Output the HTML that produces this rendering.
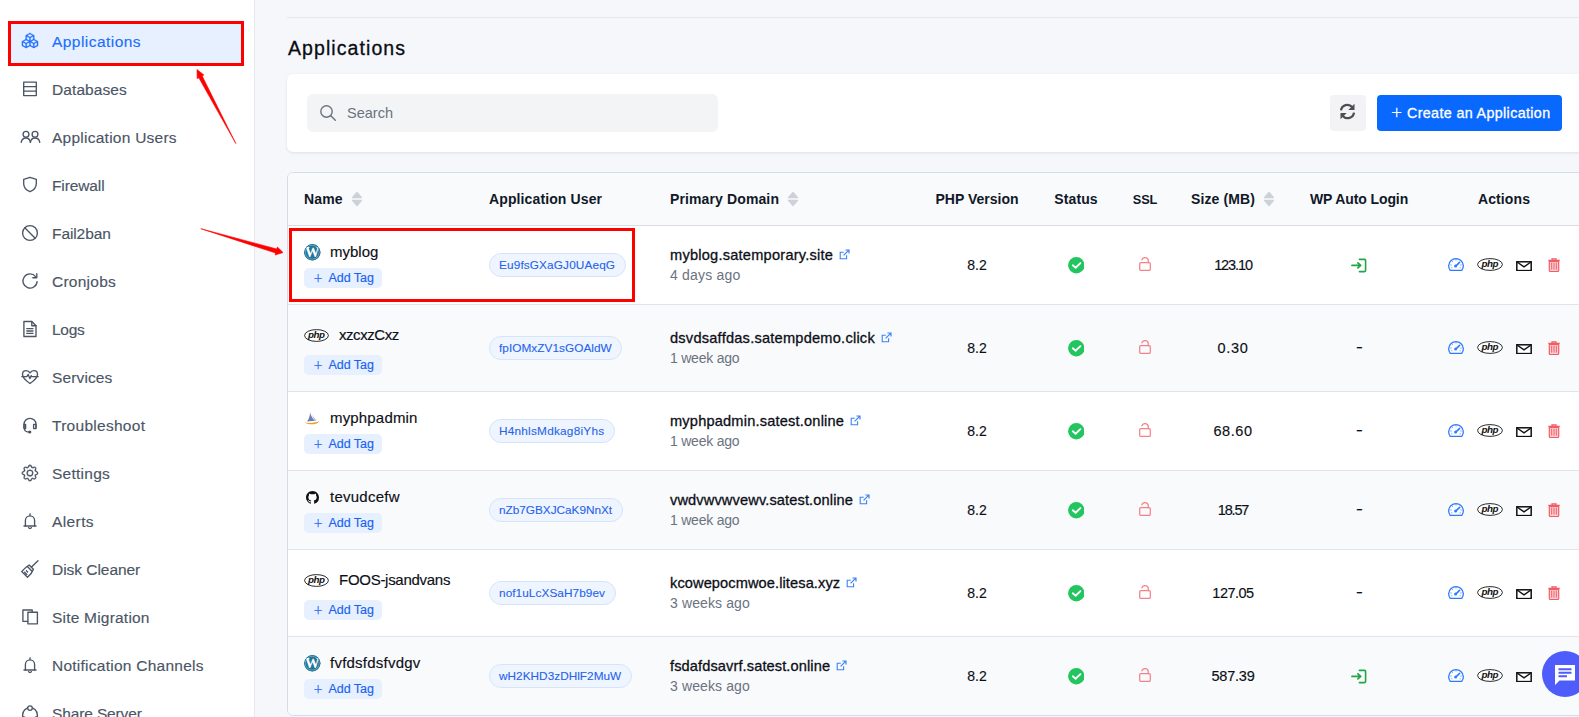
<!DOCTYPE html>
<html lang="en">
<head>
<meta charset="utf-8">
<title>Applications</title>
<style>
*{box-sizing:border-box;margin:0;padding:0}
html,body{width:1579px;height:717px;overflow:hidden}
body{font-family:"Liberation Sans",sans-serif;background:#f5f7fb;color:#111827;position:relative}
i{font-style:normal}
.side{position:absolute;left:0;top:0;width:255px;height:717px;background:#fff;border-right:1px solid #e6e9f0}
.nav{list-style:none;position:absolute;left:0;top:18px;width:254px}
.nav li{height:48px;display:flex;align-items:center;padding-left:21px;color:#4b5565;font-size:15.5px;letter-spacing:.3px;position:relative}
.nav li svg{overflow:visible;width:18px;height:18px;flex:none;margin-right:13px;stroke:currentColor;fill:none;stroke-width:1.35;stroke-linecap:round;stroke-linejoin:round;position:relative;top:-.6px}
.nav li.act{color:#1a6dff}
.nav li.act::before{content:"";position:absolute;left:8px;top:3px;width:236px;height:45px;background:#e6f0ff}
.nav li span{position:relative;-webkit-text-stroke:.15px currentColor}
.main{position:absolute;left:255px;top:0;right:0;height:717px}
.topline{position:absolute;left:32px;right:0;top:17px;height:1px;background:#e5e7eb}
h1{position:absolute;left:33px;top:35.5px;font-size:19.5px;font-weight:400;line-height:24px;color:#0a0c14;letter-spacing:1.08px;-webkit-text-stroke:.3px #0a0c14}
.card{position:absolute;left:32px;top:74px;width:1320px;height:78px;background:#fff;border-radius:6px;box-shadow:0 1px 3px rgba(16,24,40,.10)}
.search{position:absolute;left:20px;top:20px;width:411px;height:38px;border-radius:6px;background:#f3f4f6;display:flex;align-items:center;padding-left:12px;color:#6b7280;font-size:14.5px}
.search svg{width:18px;height:18px;margin-right:10px;stroke:#6b7280;fill:none;stroke-width:1.4;stroke-linecap:round}
.btn-ref{position:absolute;left:1043px;top:21px;width:36px;height:36px;border-radius:4px;background:#f3f3f5;padding:8px 0 0 8.500px}
.btn-new{position:absolute;left:1090px;top:21px;width:185px;height:36px;border-radius:4px;background:#0969ff;color:#fff;font-size:14.3px;display:flex;align-items:center;padding-left:14px;white-space:pre}
.btn-new i{font-family:"DejaVu Sans Light","DejaVu Sans",sans-serif;font-weight:200;font-size:14px;width:16px;position:relative;top:-.8px;left:-.2px;-webkit-text-stroke:.35px #fff}
.btn-new span{letter-spacing:.36px;-webkit-text-stroke:.3px #fff}
.tbl{position:absolute;left:32px;top:172px;width:1320px;height:544px;background:#fff;border:1px solid #d3dde9;border-radius:6px;overflow:hidden}
table{border-collapse:collapse;table-layout:fixed;width:1296px}
th{height:52px;background:#f8fafc;font-size:14px;font-weight:700;color:#111827;text-align:center;border-bottom:1px solid #d9dee6;white-space:nowrap}
th.l,td.l{text-align:left;padding-left:16px}
th span{vertical-align:middle;letter-spacing:.12px}
.ic-sort{width:12px;height:16px;vertical-align:middle;margin-left:8px}
td{font-size:14px;color:#0c0f17;-webkit-text-stroke:.15px #0c0f17;text-align:center;border-bottom:1px solid #e1e5eb;vertical-align:middle;white-space:nowrap}
tr.r79 td{height:79px}
tr.r87 td{height:87px}
tr.alt td{background:#f9fafb}
.nm{display:flex;align-items:center;height:22px;font-size:15px}
.nm.k-php{height:30px}
.nm svg{flex:none;margin-right:9px}
.nm span{position:relative;top:-1px}
.ic-wp{width:16.500px;height:16.500px;border-radius:50%;overflow:hidden;margin-right:9.500px!important;position:relative;top:.4px}
.ic-php{width:25px;height:13px;margin-right:10px!important}
.ic-pma{width:16px;height:13px;margin-right:10px!important}
.ic-gh{width:13px;height:13px;margin-left:1.5px;margin-right:11.5px!important}
.tag{display:block;width:78px;margin-top:5px;height:20px;line-height:21px;padding:0 0 0 24.500px;position:relative;border-radius:5px;background:#e6f0ff;color:#1a62f0;font-size:12.5px;letter-spacing:-.05px;-webkit-text-stroke:.15px #1a62f0}
.tag i{position:absolute;left:9.200px;top:.8px;font-family:"DejaVu Sans Light","DejaVu Sans",sans-serif;font-weight:200;font-size:11.5px;line-height:19px;-webkit-text-stroke:.25px #1a62f0}
.usr{display:inline-block;position:relative;top:.5px;height:24px;line-height:23.500px;padding:0 9.500px 0 9px;letter-spacing:.2px;border:1px solid #d6e4fb;border-radius:12px;background:#eff5ff;color:#2563eb;font-size:11.800px;-webkit-text-stroke:.1px #2563eb}
.dom{display:flex;align-items:center;height:20px;font-size:14.6px;-webkit-text-stroke:.3px #0c0f17}
.ic-ext{width:11px;height:11px;margin-left:6px}
.ago{height:20px;line-height:20px;color:#6b7280;-webkit-text-stroke:0;font-size:14px;letter-spacing:.25px}
.ic-ok{width:16.600px;height:16.600px;vertical-align:middle;position:relative;top:.3px}
.ic-lock{width:12px;height:14px;vertical-align:middle;position:relative;top:-2px}
.ic-login{width:16px;height:15px;vertical-align:middle;position:relative;top:-.1px;left:-.2px}
.acts svg{vertical-align:middle;position:relative;top:-1px}
.sz{font-size:14.5px}
.ic-speed{width:16px;height:14px;top:-2px!important}
.ic-php2{width:26px;height:13px;margin-left:13px}
.ic-mail{width:16px;height:10.400px;margin-left:13px;top:.4px!important}
.ic-trash{width:12px;height:14px;margin-left:16.500px}
.chat{position:absolute;left:1542px;top:651px;width:46px;height:46px;border-radius:23px;background:#4d5cfb;padding:13px 0 0 12px}
.anno{position:absolute;border:3px solid #ff0000}
.a1{left:8px;top:21px;width:236px;height:45px}
.a2{left:289px;top:228px;width:346px;height:74px}
.arrows{position:absolute;left:0;top:0}
.dash{display:inline-block;transform:scaleX(1.45);position:relative;top:-.5px}
</style>
</head>
<body>
<div class="side">
<ul class="nav">
<li class="act"><svg viewBox="0 0 18 18"><g transform="translate(.9 1.1) scale(1.01 .93)" fill="currentColor" stroke="currentColor" stroke-width=".35"><path d="M7.752.066a.5.5 0 0 1 .496 0l3.75 2.143a.5.5 0 0 1 .252.434v3.995l3.498 2A.5.5 0 0 1 16 9.07v4.286a.5.5 0 0 1-.252.434l-3.75 2.143a.5.5 0 0 1-.496 0l-3.502-2-3.502 2.001a.5.5 0 0 1-.496 0l-3.75-2.143A.5.5 0 0 1 0 13.357V9.071a.5.5 0 0 1 .252-.434L3.75 6.638V2.643a.5.5 0 0 1 .252-.434L7.752.066ZM4.25 7.504 1.508 9.071l2.742 1.567 2.742-1.567L4.25 7.504ZM7.5 9.933l-2.75 1.571v3.134l2.75-1.571V9.933Zm1 3.134 2.75 1.571v-3.134L8.5 9.933v3.134Zm.508-3.996 2.742 1.567 2.742-1.567-2.742-1.567-2.742 1.567Zm2.242-2.433V3.504L8.500 5.076V8.21l2.75-1.572ZM7.5 8.21V5.076L4.75 3.504v3.134L7.5 8.21ZM5.258 2.643 8 4.21l2.742-1.567L8 1.076 5.258 2.643ZM15 9.933l-2.75 1.571v3.134L15 13.067V9.933ZM3.75 14.638v-3.134L1 9.933v3.134l2.75 1.571Z"/></g></svg><span style="letter-spacing:0.45px">Applications</span></li>
<li><svg viewBox="0 0 18 18"><rect x="2.7" y="2.100" width="12.600" height="13.500"/><path d="M2.700 6.600H15.300M2.700 11.100H15.300"/></svg><span style="letter-spacing:0.09px">Databases</span></li>
<li><svg viewBox="0 0 18 18"><circle cx="5" cy="6.200" r="2.900"/><circle cx="14" cy="6.200" r="2.900"/><path d="M.2 14.300C.7 11.500 2.500 10 5 10S8.900 11.500 9.400 14.300"/><path d="M9.400 14.300C9.900 11.500 11.500 10 14 10S18.300 11.500 18.800 14.300"/></svg><span style="letter-spacing:0.25px">Application Users</span></li>
<li><svg viewBox="0 0 18 18"><path d="M9 1.300 15.300 3.300V7.800C15.300 11.500 12.800 14.200 9 15.700 5.200 14.200 2.700 11.500 2.700 7.800V3.300Z"/></svg><span style="letter-spacing:-0.11px">Firewall</span></li>
<li><svg viewBox="0 0 18 18"><circle cx="9" cy="9" r="7.400"/><path d="M3.800 3.800 14.200 14.200"/></svg><span style="letter-spacing:-0.09px">Fail2ban</span></li>
<li><svg viewBox="0 0 18 18"><path d="M16.100 9.600A7.100 7.100 0 1 1 14.600 4.600"/><path d="M15.800 1.700V5.700H11.800"/></svg><span style="letter-spacing:0.25px">Cronjobs</span></li>
<li><svg viewBox="0 0 18 18"><path d="M2.900 1.500H10.800L15 5.700V16.500H2.900Z"/><path d="M10.800 1.500V5.700H15"/><path d="M5.800 8.600H12M5.800 11H12M5.800 13.400H12"/></svg><span style="letter-spacing:-0.25px">Logs</span></li>
<li><svg viewBox="0 0 18 18"><path d="M9 15.500C3.200 11.700 1.500 8.700 1.500 6.300 1.500 4 3.200 2.600 5.100 2.600 6.700 2.600 8.200 3.500 9 4.900 9.800 3.500 11.300 2.600 12.900 2.600 14.800 2.600 16.500 4 16.500 6.300 16.500 8.700 14.800 11.700 9 15.500Z"/><path d="M.8 8.600H5.800L7.200 6.400 8.900 10.600 10.200 7.700 10.900 8.600H17.200"/></svg><span style="letter-spacing:0.13px">Services</span></li>
<li><svg viewBox="0 0 18 18"><path d="M3 11.500V8.300A6 6 0 0 1 15 8.300V11.500"/><path d="M12.600 8.400H15V12.600H12.600Z"/><path d="M3 8.400H4.600V12.600H3Z"/><path d="M3.400 12.800C3.600 15 5.200 16 7.600 16"/><circle cx="8.800" cy="16" r=".9" fill="currentColor"/></svg><span style="letter-spacing:0.28px">Troubleshoot</span></li>
<li><svg viewBox="0 0 18 18"><g transform="translate(.7 .8) scale(1.03)" fill="currentColor" stroke="currentColor" stroke-width=".3"><path d="M8 4.754a3.246 3.246 0 1 0 0 6.492 3.246 3.246 0 0 0 0-6.492zM5.754 8a2.246 2.246 0 1 1 4.492 0 2.246 2.246 0 0 1-4.492 0z"/><path d="M9.796 1.343c-.527-1.79-3.065-1.79-3.592 0l-.094.319a.873.873 0 0 1-1.255.52l-.292-.16c-1.64-.892-3.433.902-2.54 2.541l.159.292a.873.873 0 0 1-.52 1.255l-.319.094c-1.79.527-1.79 3.065 0 3.592l.319.094a.873.873 0 0 1 .52 1.255l-.16.292c-.892 1.64.901 3.434 2.541 2.54l.292-.159a.873.873 0 0 1 1.255.52l.094.319c.527 1.79 3.065 1.79 3.592 0l.094-.319a.873.873 0 0 1 1.255-.52l.292.16c1.64.893 3.434-.902 2.54-2.541l-.159-.292a.873.873 0 0 1 .52-1.255l.319-.094c1.79-.527 1.79-3.065 0-3.592l-.319-.094a.873.873 0 0 1-.52-1.255l.16-.292c.893-1.64-.902-3.433-2.541-2.54l-.292.159a.873.873 0 0 1-1.255-.52l-.094-.319zm-2.633.283c.246-.835 1.428-.835 1.674 0l.094.319a1.873 1.873 0 0 0 2.693 1.115l.291-.16c.764-.415 1.6.42 1.184 1.185l-.159.292a1.873 1.873 0 0 0 1.116 2.692l.318.094c.835.246.835 1.428 0 1.674l-.319.094a1.873 1.873 0 0 0-1.115 2.693l.16.291c.415.764-.42 1.6-1.185 1.184l-.291-.159a1.873 1.873 0 0 0-2.693 1.116l-.094.318c-.246.835-1.428.835-1.674 0l-.094-.319a1.873 1.873 0 0 0-2.692-1.115l-.292.16c-.764.415-1.6-.42-1.184-1.185l.159-.291A1.873 1.873 0 0 0 1.945 8.930l-.319-.094c-.835-.246-.835-1.428 0-1.674l.319-.094A1.873 1.873 0 0 0 3.060 4.377l-.16-.292c-.415-.764.42-1.6 1.185-1.184l.292.159a1.873 1.873 0 0 0 2.692-1.115l.094-.319z"/></g></svg><span style="letter-spacing:0.26px">Settings</span></li>
<li><svg viewBox="0 0 18 18"><path d="M4.400 14V8.400A4.600 4.600 0 0 1 13.600 8.400V14"/><path d="M3 14H15"/><path d="M7.600 15.600A1.500 1.500 0 0 0 10.400 15.600"/><path d="M9 1.800V3.600"/></svg><span style="letter-spacing:0.4px">Alerts</span></li>
<li><svg viewBox="0 0 18 18"><path d="M17 .8 10.500 7"/><path d="M8.200 5 12.400 9.200C11.500 12 9.300 14.800 6.500 17.300L.7 11.600C3.300 8.800 5.500 6.400 8.200 5Z"/><path d="M6.400 6.600 10.800 11"/><path d="M3.600 12.200 5.800 14.400M5.400 10.800 6.600 12"/></svg><span style="letter-spacing:-0.04px">Disk Cleaner</span></li>
<li><svg viewBox="0 0 18 18"><path d="M6.900 13.300H1.900V2H11.200V4.200"/><rect x="6.900" y="4.200" width="9.500" height="11.600"/></svg><span style="letter-spacing:0.21px">Site Migration</span></li>
<li><svg viewBox="0 0 18 18"><path d="M4.400 14V8.400A4.600 4.600 0 0 1 13.600 8.400V14"/><path d="M3 14H15"/><path d="M7.600 15.600A1.500 1.500 0 0 0 10.400 15.600"/><path d="M9 1.800V3.600"/></svg><span style="letter-spacing:0.25px">Notification Channels</span></li>
<li><svg viewBox="0 0 18 18"><circle cx="9" cy="11" r="7.400"/><circle cx="9" cy="4.100" r="2.300" fill="#fff"/><circle cx="2.600" cy="14.700" r="1.700" fill="#fff"/><circle cx="15.400" cy="14.700" r="1.700" fill="#fff"/></svg><span style="letter-spacing:-0.13px">Share Server</span></li>
</ul>
</div>
<div class="main">
<div class="topline"></div>
<h1>Applications</h1>
<div class="card">
<div class="search"><svg viewBox="0 0 18 18"><circle cx="7.500" cy="7.500" r="5.700"/><path d="M11.800 11.800 16.300 16.300"/></svg><span>Search</span></div>
<div class="btn-ref"><svg viewBox="0 0 16 16" width="17" height="17"><path d="M1.900 7A6 6 0 0 1 12.400 3.800" fill="none" stroke="#4d4d52" stroke-width="2.100"/><path d="M14.600 .8V6.600H8.800Z" fill="#4d4d52"/><path d="M14.100 9A6 6 0 0 1 3.600 12.200" fill="none" stroke="#4d4d52" stroke-width="2.100"/><path d="M1.400 15.200V9.400H7.200Z" fill="#4d4d52"/></svg></div>
<div class="btn-new"><i>+</i><span>Create an Application</span></div>
</div>
<div class="tbl">
<table>
<colgroup><col style="width:185px"><col style="width:181px"><col style="width:266px"><col style="width:114px"><col style="width:84px"><col style="width:54px"><col style="width:122px"><col style="width:130px"><col style="width:160px"></colgroup>
<thead><tr><th class="l"><span>Name</span><svg class="ic-sort" viewBox="0 0 12 16"><path d="M6 1.300 10.600 6.600H1.400Z" fill="#cdd1d9" stroke="#cdd1d9" stroke-width="1.200" stroke-linejoin="round"/><path d="M6 14.700 10.600 9.400H1.400Z" fill="#cdd1d9" stroke="#cdd1d9" stroke-width="1.200" stroke-linejoin="round"/></svg></th><th class="l"><span>Application User</span></th><th class="l"><span>Primary Domain</span><svg class="ic-sort" viewBox="0 0 12 16"><path d="M6 1.300 10.600 6.600H1.400Z" fill="#cdd1d9" stroke="#cdd1d9" stroke-width="1.200" stroke-linejoin="round"/><path d="M6 14.700 10.600 9.400H1.400Z" fill="#cdd1d9" stroke="#cdd1d9" stroke-width="1.200" stroke-linejoin="round"/></svg></th><th><span style="letter-spacing:0">PHP Version</span></th><th><span>Status</span></th><th><span style="letter-spacing:-.2px;font-size:12.800px">SSL</span></th><th><span>Size (MB)</span><svg class="ic-sort" viewBox="0 0 12 16"><path d="M6 1.300 10.600 6.600H1.400Z" fill="#cdd1d9" stroke="#cdd1d9" stroke-width="1.200" stroke-linejoin="round"/><path d="M6 14.700 10.600 9.400H1.400Z" fill="#cdd1d9" stroke="#cdd1d9" stroke-width="1.200" stroke-linejoin="round"/></svg></th><th><span style="letter-spacing:-.1px">WP Auto Login</span></th><th><span>Actions</span></th></tr></thead>
<tbody>
<tr class="r79">
<td class="l"><div class="nm k-wp"><svg class="ic-wp" viewBox="0 0 17 17"><circle cx="8.500" cy="8.500" r="8.400" fill="#21759b"/><text x="8.500" y="13.700" text-anchor="middle" font-family="Liberation Serif,serif" font-weight="700" font-size="15" fill="#fff">W</text><circle cx="8.500" cy="8.500" r="7.300" fill="none" stroke="#fff" stroke-width=".5" opacity=".85"/><circle cx="8.500" cy="8.500" r="8" fill="none" stroke="#21759b" stroke-width=".9"/></svg><span>myblog</span></div><div class="tag"><i>+</i>Add Tag</div></td>
<td class="l"><span class="usr" style="letter-spacing:0.13px">Eu9fsGXaGJ0UAeqG</span></td>
<td class="l"><div class="dom"><span style="letter-spacing:0.23px">myblog.satemporary.site</span><svg class="ic-ext" viewBox="0 0 11 11"><path d="M7.600 6.300V9.700H1.200V3.200H4.800" fill="none" stroke="#3b82f6" stroke-width="1.100"/><path d="M4.600 6.400 9.800 1.200M6.400 1H10V4.600" fill="none" stroke="#3b82f6" stroke-width="1.200"/></svg></div><div class="ago" style="letter-spacing:0.2px">4 days ago</div></td>
<td>8.2</td>
<td><svg class="ic-ok" viewBox="0 0 17 17"><circle cx="8.500" cy="8.500" r="8.400" fill="#22c55e"/><path d="M4.900 8.500 7.800 11 12.700 6.200" fill="none" stroke="#fff" stroke-width="1.900" stroke-linecap="round" stroke-linejoin="round"/></svg></td>
<td><svg class="ic-lock" viewBox="0 0 12 14"><rect x=".7" y="5.700" width="10.600" height="7.700" rx="1.100" fill="none" stroke="#f5828b" stroke-width="1.250"/><path d="M9.300 5.700V3.900A3.300 3.300 0 0 0 2.900 2.800" fill="none" stroke="#f5828b" stroke-width="1.250" stroke-linecap="round"/></svg></td>
<td class="sz"><span style="letter-spacing:-1.1px">123.10</span></td>
<td><svg class="ic-login" viewBox="0 0 16 15"><path d="M8.400 1.400H13.600A1 1 0 0 1 14.600 2.400V12.600A1 1 0 0 1 13.600 13.600H8.400" fill="none" stroke="#22a548" stroke-width="1.600" stroke-linecap="round"/><path d="M1 7.400H9.300M6.900 4.900 9.700 7.400 6.900 9.900" fill="none" stroke="#22a548" stroke-width="1.750" stroke-linecap="round" stroke-linejoin="round"/></svg></td>
<td class="acts"><svg class="ic-speed" viewBox="0 0 16 14"><path d="M2.200 13.300A7.300 7.300 0 1 1 13.800 13.300Z" fill="#fff" stroke="#2f7bff" stroke-width="1.300" stroke-linejoin="round"/><path d="M8 8.800 11.600 5.400" stroke="#2f7bff" stroke-width="1.600" stroke-linecap="round"/><circle cx="7.600" cy="9" r="1.500" fill="#2f7bff"/><path d="M2.300 8H3.600M3.900 4 4.800 4.900M8 2.200V3.500M12.400 8H13.700M3.300 10.800H4.300M11.700 10.800H12.700" stroke="#2f7bff" stroke-width=".8"/></svg><svg class="ic-php2" viewBox="0 0 26 13"><ellipse cx="13.0" cy="6.500" rx="12.4" ry="5.900" fill="#fff" stroke="#111" stroke-width=".9"/><text x="12.8" y="9.400" text-anchor="middle" font-family="Liberation Sans,sans-serif" font-weight="700" font-style="italic" font-size="9.800" letter-spacing="-.5" fill="#111">php</text></svg><svg class="ic-mail" viewBox="0 0 16 10.400"><rect x=".8" y=".8" width="14.400" height="8.800" fill="#fff" stroke="#111" stroke-width="1.500"/><path d="M1 1 8 5.800 15 1" fill="none" stroke="#111" stroke-width="1.400"/></svg><svg class="ic-trash" viewBox="0 0 12 14"><path d="M.3 2.300H11.700M4 2V.8H8V2" fill="none" stroke="#f25c66" stroke-width="1.300"/><path d="M1.300 3.300H10.700V12.200A1.300 1.300 0 0 1 9.400 13.500H2.600A1.300 1.300 0 0 1 1.300 12.200Z" fill="#fbd0d3" stroke="#f25c66" stroke-width="1.200"/><path d="M3.700 4.600V11.600M6 4.600V11.600M8.300 4.600V11.600" stroke="#f25c66" stroke-width="1"/></svg></td>
</tr>
<tr class="r87 alt">
<td class="l"><div class="nm k-php"><svg class="ic-php" viewBox="0 0 25 13"><ellipse cx="12.5" cy="6.500" rx="11.9" ry="5.900" fill="#fff" stroke="#111" stroke-width=".9"/><text x="12.3" y="9.400" text-anchor="middle" font-family="Liberation Sans,sans-serif" font-weight="700" font-style="italic" font-size="9.800" letter-spacing="-.5" fill="#111">php</text></svg><span style="letter-spacing:-0.44px">xzcxzCxz</span></div><div class="tag"><i>+</i>Add Tag</div></td>
<td class="l"><span class="usr" style="letter-spacing:0.04px">fpIOMxZV1sGOAldW</span></td>
<td class="l"><div class="dom"><span style="letter-spacing:0.23px">dsvdsaffdas.satempdemo.click</span><svg class="ic-ext" viewBox="0 0 11 11"><path d="M7.600 6.300V9.700H1.200V3.200H4.800" fill="none" stroke="#3b82f6" stroke-width="1.100"/><path d="M4.600 6.400 9.800 1.200M6.400 1H10V4.600" fill="none" stroke="#3b82f6" stroke-width="1.200"/></svg></div><div class="ago" style="letter-spacing:-0.23px">1 week ago</div></td>
<td>8.2</td>
<td><svg class="ic-ok" viewBox="0 0 17 17"><circle cx="8.500" cy="8.500" r="8.400" fill="#22c55e"/><path d="M4.900 8.500 7.800 11 12.700 6.200" fill="none" stroke="#fff" stroke-width="1.900" stroke-linecap="round" stroke-linejoin="round"/></svg></td>
<td><svg class="ic-lock" viewBox="0 0 12 14"><rect x=".7" y="5.700" width="10.600" height="7.700" rx="1.100" fill="none" stroke="#f5828b" stroke-width="1.250"/><path d="M9.300 5.700V3.900A3.300 3.300 0 0 0 2.900 2.800" fill="none" stroke="#f5828b" stroke-width="1.250" stroke-linecap="round"/></svg></td>
<td class="sz"><span style="letter-spacing:0.65px">0.30</span></td>
<td><span class="dash">-</span></td>
<td class="acts"><svg class="ic-speed" viewBox="0 0 16 14"><path d="M2.200 13.300A7.300 7.300 0 1 1 13.800 13.300Z" fill="#fff" stroke="#2f7bff" stroke-width="1.300" stroke-linejoin="round"/><path d="M8 8.800 11.600 5.400" stroke="#2f7bff" stroke-width="1.600" stroke-linecap="round"/><circle cx="7.600" cy="9" r="1.500" fill="#2f7bff"/><path d="M2.300 8H3.600M3.900 4 4.800 4.900M8 2.200V3.500M12.400 8H13.700M3.300 10.800H4.300M11.700 10.800H12.700" stroke="#2f7bff" stroke-width=".8"/></svg><svg class="ic-php2" viewBox="0 0 26 13"><ellipse cx="13.0" cy="6.500" rx="12.4" ry="5.900" fill="#fff" stroke="#111" stroke-width=".9"/><text x="12.8" y="9.400" text-anchor="middle" font-family="Liberation Sans,sans-serif" font-weight="700" font-style="italic" font-size="9.800" letter-spacing="-.5" fill="#111">php</text></svg><svg class="ic-mail" viewBox="0 0 16 10.400"><rect x=".8" y=".8" width="14.400" height="8.800" fill="#fff" stroke="#111" stroke-width="1.500"/><path d="M1 1 8 5.800 15 1" fill="none" stroke="#111" stroke-width="1.400"/></svg><svg class="ic-trash" viewBox="0 0 12 14"><path d="M.3 2.300H11.700M4 2V.8H8V2" fill="none" stroke="#f25c66" stroke-width="1.300"/><path d="M1.300 3.300H10.700V12.200A1.300 1.300 0 0 1 9.400 13.500H2.600A1.300 1.300 0 0 1 1.300 12.200Z" fill="#fbd0d3" stroke="#f25c66" stroke-width="1.200"/><path d="M3.700 4.600V11.600M6 4.600V11.600M8.300 4.600V11.600" stroke="#f25c66" stroke-width="1"/></svg></td>
</tr>
<tr class="r79">
<td class="l"><div class="nm k-pma"><svg class="ic-pma" viewBox="0 0 16 13"><path d="M6 .2C6.800 3.500 8.600 6.600 11 8.800L3 9.600C5 6.800 6.100 3.600 6 .2Z" fill="#6e7db5"/><path d="M8.300 2.800C9.300 5 10.800 7 12.800 8.500L11 8.700C9.700 7 8.700 5 8.300 2.800Z" fill="#a9b3d6"/><path d="M.6 10.600C5.500 11.400 10.500 10.800 15.400 9.200 14.600 10.400 13.400 11.300 12 11.700 8 12.800 3.500 12.600 .6 10.600Z" fill="#f59b1c"/></svg><span style="letter-spacing:0.17px">myphpadmin</span></div><div class="tag"><i>+</i>Add Tag</div></td>
<td class="l"><span class="usr" style="letter-spacing:0.23px">H4nhlsMdkag8iYhs</span></td>
<td class="l"><div class="dom"><span style="letter-spacing:0.19px">myphpadmin.satest.online</span><svg class="ic-ext" viewBox="0 0 11 11"><path d="M7.600 6.300V9.700H1.200V3.200H4.800" fill="none" stroke="#3b82f6" stroke-width="1.100"/><path d="M4.600 6.400 9.800 1.200M6.400 1H10V4.600" fill="none" stroke="#3b82f6" stroke-width="1.200"/></svg></div><div class="ago" style="letter-spacing:-0.23px">1 week ago</div></td>
<td>8.2</td>
<td><svg class="ic-ok" viewBox="0 0 17 17"><circle cx="8.500" cy="8.500" r="8.400" fill="#22c55e"/><path d="M4.900 8.500 7.800 11 12.700 6.200" fill="none" stroke="#fff" stroke-width="1.900" stroke-linecap="round" stroke-linejoin="round"/></svg></td>
<td><svg class="ic-lock" viewBox="0 0 12 14"><rect x=".7" y="5.700" width="10.600" height="7.700" rx="1.100" fill="none" stroke="#f5828b" stroke-width="1.250"/><path d="M9.300 5.700V3.900A3.300 3.300 0 0 0 2.900 2.800" fill="none" stroke="#f5828b" stroke-width="1.250" stroke-linecap="round"/></svg></td>
<td class="sz"><span style="letter-spacing:0.54px">68.60</span></td>
<td><span class="dash">-</span></td>
<td class="acts"><svg class="ic-speed" viewBox="0 0 16 14"><path d="M2.200 13.300A7.300 7.300 0 1 1 13.800 13.300Z" fill="#fff" stroke="#2f7bff" stroke-width="1.300" stroke-linejoin="round"/><path d="M8 8.800 11.600 5.400" stroke="#2f7bff" stroke-width="1.600" stroke-linecap="round"/><circle cx="7.600" cy="9" r="1.500" fill="#2f7bff"/><path d="M2.300 8H3.600M3.900 4 4.800 4.900M8 2.200V3.500M12.400 8H13.700M3.300 10.800H4.300M11.700 10.800H12.700" stroke="#2f7bff" stroke-width=".8"/></svg><svg class="ic-php2" viewBox="0 0 26 13"><ellipse cx="13.0" cy="6.500" rx="12.4" ry="5.900" fill="#fff" stroke="#111" stroke-width=".9"/><text x="12.8" y="9.400" text-anchor="middle" font-family="Liberation Sans,sans-serif" font-weight="700" font-style="italic" font-size="9.800" letter-spacing="-.5" fill="#111">php</text></svg><svg class="ic-mail" viewBox="0 0 16 10.400"><rect x=".8" y=".8" width="14.400" height="8.800" fill="#fff" stroke="#111" stroke-width="1.500"/><path d="M1 1 8 5.800 15 1" fill="none" stroke="#111" stroke-width="1.400"/></svg><svg class="ic-trash" viewBox="0 0 12 14"><path d="M.3 2.300H11.700M4 2V.8H8V2" fill="none" stroke="#f25c66" stroke-width="1.300"/><path d="M1.300 3.300H10.700V12.200A1.300 1.300 0 0 1 9.400 13.500H2.600A1.300 1.300 0 0 1 1.300 12.200Z" fill="#fbd0d3" stroke="#f25c66" stroke-width="1.200"/><path d="M3.700 4.600V11.600M6 4.600V11.600M8.300 4.600V11.600" stroke="#f25c66" stroke-width="1"/></svg></td>
</tr>
<tr class="r79 alt">
<td class="l"><div class="nm k-gh"><svg class="ic-gh" viewBox="0 0 16 16"><path fill="#111" d="M8 0C3.580 0 0 3.580 0 8c0 3.540 2.290 6.530 5.470 7.590.4.070.550-.170.550-.380 0-.190-.010-.820-.010-1.490-2.010.370-2.530-.490-2.690-.940-.090-.230-.480-.940-.820-1.130-.280-.150-.680-.520-.010-.530.630-.010 1.080.580 1.230.820.720 1.210 1.870.870 2.330.660.070-.520.280-.870.510-1.070-1.780-.2-3.640-.890-3.640-3.950 0-.870.310-1.590.820-2.150-.080-.2-.360-1.020.080-2.120 0 0 .670-.210 2.200.820.640-.180 1.320-.270 2-.270.680 0 1.360.090 2 .270 1.530-1.040 2.200-.820 2.200-.820.440 1.100.160 1.920.080 2.120.510.560.820 1.270.820 2.150 0 3.070-1.870 3.750-3.650 3.950.290.250.540.730.540 1.480 0 1.070-.010 1.930-.010 2.200 0 .210.150.460.550.380A8.012 8.012 0 0 0 16 8c0-4.420-3.580-8-8-8z"/></svg><span style="letter-spacing:0.25px">tevudcefw</span></div><div class="tag"><i>+</i>Add Tag</div></td>
<td class="l"><span class="usr" style="letter-spacing:-0.02px">nZb7GBXJCaK9NnXt</span></td>
<td class="l"><div class="dom"><span style="letter-spacing:0.13px">vwdvwvwvewv.satest.online</span><svg class="ic-ext" viewBox="0 0 11 11"><path d="M7.600 6.300V9.700H1.200V3.200H4.800" fill="none" stroke="#3b82f6" stroke-width="1.100"/><path d="M4.600 6.400 9.800 1.200M6.400 1H10V4.600" fill="none" stroke="#3b82f6" stroke-width="1.200"/></svg></div><div class="ago" style="letter-spacing:-0.23px">1 week ago</div></td>
<td>8.2</td>
<td><svg class="ic-ok" viewBox="0 0 17 17"><circle cx="8.500" cy="8.500" r="8.400" fill="#22c55e"/><path d="M4.900 8.500 7.800 11 12.700 6.200" fill="none" stroke="#fff" stroke-width="1.900" stroke-linecap="round" stroke-linejoin="round"/></svg></td>
<td><svg class="ic-lock" viewBox="0 0 12 14"><rect x=".7" y="5.700" width="10.600" height="7.700" rx="1.100" fill="none" stroke="#f5828b" stroke-width="1.250"/><path d="M9.300 5.700V3.900A3.300 3.300 0 0 0 2.900 2.800" fill="none" stroke="#f5828b" stroke-width="1.250" stroke-linecap="round"/></svg></td>
<td class="sz"><span style="letter-spacing:-1.2px">18.57</span></td>
<td><span class="dash">-</span></td>
<td class="acts"><svg class="ic-speed" viewBox="0 0 16 14"><path d="M2.200 13.300A7.300 7.300 0 1 1 13.800 13.300Z" fill="#fff" stroke="#2f7bff" stroke-width="1.300" stroke-linejoin="round"/><path d="M8 8.800 11.600 5.400" stroke="#2f7bff" stroke-width="1.600" stroke-linecap="round"/><circle cx="7.600" cy="9" r="1.500" fill="#2f7bff"/><path d="M2.300 8H3.600M3.900 4 4.800 4.900M8 2.200V3.500M12.400 8H13.700M3.300 10.800H4.300M11.700 10.800H12.700" stroke="#2f7bff" stroke-width=".8"/></svg><svg class="ic-php2" viewBox="0 0 26 13"><ellipse cx="13.0" cy="6.500" rx="12.4" ry="5.900" fill="#fff" stroke="#111" stroke-width=".9"/><text x="12.8" y="9.400" text-anchor="middle" font-family="Liberation Sans,sans-serif" font-weight="700" font-style="italic" font-size="9.800" letter-spacing="-.5" fill="#111">php</text></svg><svg class="ic-mail" viewBox="0 0 16 10.400"><rect x=".8" y=".8" width="14.400" height="8.800" fill="#fff" stroke="#111" stroke-width="1.500"/><path d="M1 1 8 5.800 15 1" fill="none" stroke="#111" stroke-width="1.400"/></svg><svg class="ic-trash" viewBox="0 0 12 14"><path d="M.3 2.300H11.700M4 2V.8H8V2" fill="none" stroke="#f25c66" stroke-width="1.300"/><path d="M1.300 3.300H10.700V12.200A1.300 1.300 0 0 1 9.400 13.500H2.600A1.300 1.300 0 0 1 1.300 12.200Z" fill="#fbd0d3" stroke="#f25c66" stroke-width="1.200"/><path d="M3.700 4.600V11.600M6 4.600V11.600M8.300 4.600V11.600" stroke="#f25c66" stroke-width="1"/></svg></td>
</tr>
<tr class="r87">
<td class="l"><div class="nm k-php"><svg class="ic-php" viewBox="0 0 25 13"><ellipse cx="12.5" cy="6.500" rx="11.9" ry="5.900" fill="#fff" stroke="#111" stroke-width=".9"/><text x="12.3" y="9.400" text-anchor="middle" font-family="Liberation Sans,sans-serif" font-weight="700" font-style="italic" font-size="9.800" letter-spacing="-.5" fill="#111">php</text></svg><span style="letter-spacing:-0.28px">FOOS-jsandvans</span></div><div class="tag"><i>+</i>Add Tag</div></td>
<td class="l"><span class="usr" style="letter-spacing:0.07px">nof1uLcXSaH7b9ev</span></td>
<td class="l"><div class="dom"><span style="letter-spacing:0.1px">kcowepocmwoe.litesa.xyz</span><svg class="ic-ext" viewBox="0 0 11 11"><path d="M7.600 6.300V9.700H1.200V3.200H4.800" fill="none" stroke="#3b82f6" stroke-width="1.100"/><path d="M4.600 6.400 9.800 1.200M6.400 1H10V4.600" fill="none" stroke="#3b82f6" stroke-width="1.200"/></svg></div><div class="ago" style="letter-spacing:0.12px">3 weeks ago</div></td>
<td>8.2</td>
<td><svg class="ic-ok" viewBox="0 0 17 17"><circle cx="8.500" cy="8.500" r="8.400" fill="#22c55e"/><path d="M4.900 8.500 7.800 11 12.700 6.200" fill="none" stroke="#fff" stroke-width="1.900" stroke-linecap="round" stroke-linejoin="round"/></svg></td>
<td><svg class="ic-lock" viewBox="0 0 12 14"><rect x=".7" y="5.700" width="10.600" height="7.700" rx="1.100" fill="none" stroke="#f5828b" stroke-width="1.250"/><path d="M9.300 5.700V3.900A3.300 3.300 0 0 0 2.900 2.800" fill="none" stroke="#f5828b" stroke-width="1.250" stroke-linecap="round"/></svg></td>
<td class="sz"><span style="letter-spacing:-0.5px">127.05</span></td>
<td><span class="dash">-</span></td>
<td class="acts"><svg class="ic-speed" viewBox="0 0 16 14"><path d="M2.200 13.300A7.300 7.300 0 1 1 13.800 13.300Z" fill="#fff" stroke="#2f7bff" stroke-width="1.300" stroke-linejoin="round"/><path d="M8 8.800 11.600 5.400" stroke="#2f7bff" stroke-width="1.600" stroke-linecap="round"/><circle cx="7.600" cy="9" r="1.500" fill="#2f7bff"/><path d="M2.300 8H3.600M3.900 4 4.800 4.900M8 2.200V3.500M12.400 8H13.700M3.300 10.800H4.300M11.700 10.800H12.700" stroke="#2f7bff" stroke-width=".8"/></svg><svg class="ic-php2" viewBox="0 0 26 13"><ellipse cx="13.0" cy="6.500" rx="12.4" ry="5.900" fill="#fff" stroke="#111" stroke-width=".9"/><text x="12.8" y="9.400" text-anchor="middle" font-family="Liberation Sans,sans-serif" font-weight="700" font-style="italic" font-size="9.800" letter-spacing="-.5" fill="#111">php</text></svg><svg class="ic-mail" viewBox="0 0 16 10.400"><rect x=".8" y=".8" width="14.400" height="8.800" fill="#fff" stroke="#111" stroke-width="1.500"/><path d="M1 1 8 5.800 15 1" fill="none" stroke="#111" stroke-width="1.400"/></svg><svg class="ic-trash" viewBox="0 0 12 14"><path d="M.3 2.300H11.700M4 2V.8H8V2" fill="none" stroke="#f25c66" stroke-width="1.300"/><path d="M1.300 3.300H10.700V12.200A1.300 1.300 0 0 1 9.400 13.500H2.600A1.300 1.300 0 0 1 1.300 12.200Z" fill="#fbd0d3" stroke="#f25c66" stroke-width="1.200"/><path d="M3.700 4.600V11.600M6 4.600V11.600M8.300 4.600V11.600" stroke="#f25c66" stroke-width="1"/></svg></td>
</tr>
<tr class="r79 alt">
<td class="l"><div class="nm k-wp"><svg class="ic-wp" viewBox="0 0 17 17"><circle cx="8.500" cy="8.500" r="8.400" fill="#21759b"/><text x="8.500" y="13.700" text-anchor="middle" font-family="Liberation Serif,serif" font-weight="700" font-size="15" fill="#fff">W</text><circle cx="8.500" cy="8.500" r="7.300" fill="none" stroke="#fff" stroke-width=".5" opacity=".85"/><circle cx="8.500" cy="8.500" r="8" fill="none" stroke="#21759b" stroke-width=".9"/></svg><span style="letter-spacing:0.23px">fvfdsfdsfvdgv</span></div><div class="tag"><i>+</i>Add Tag</div></td>
<td class="l"><span class="usr" style="letter-spacing:0.02px">wH2KHD3zDHlF2MuW</span></td>
<td class="l"><div class="dom"><span style="letter-spacing:0.11px">fsdafdsavrf.satest.online</span><svg class="ic-ext" viewBox="0 0 11 11"><path d="M7.600 6.300V9.700H1.200V3.200H4.800" fill="none" stroke="#3b82f6" stroke-width="1.100"/><path d="M4.600 6.400 9.800 1.200M6.400 1H10V4.600" fill="none" stroke="#3b82f6" stroke-width="1.200"/></svg></div><div class="ago" style="letter-spacing:0.12px">3 weeks ago</div></td>
<td>8.2</td>
<td><svg class="ic-ok" viewBox="0 0 17 17"><circle cx="8.500" cy="8.500" r="8.400" fill="#22c55e"/><path d="M4.900 8.500 7.800 11 12.700 6.200" fill="none" stroke="#fff" stroke-width="1.900" stroke-linecap="round" stroke-linejoin="round"/></svg></td>
<td><svg class="ic-lock" viewBox="0 0 12 14"><rect x=".7" y="5.700" width="10.600" height="7.700" rx="1.100" fill="none" stroke="#f5828b" stroke-width="1.250"/><path d="M9.300 5.700V3.900A3.300 3.300 0 0 0 2.900 2.800" fill="none" stroke="#f5828b" stroke-width="1.250" stroke-linecap="round"/></svg></td>
<td class="sz"><span style="letter-spacing:-0.2px">587.39</span></td>
<td><svg class="ic-login" viewBox="0 0 16 15"><path d="M8.400 1.400H13.600A1 1 0 0 1 14.600 2.400V12.600A1 1 0 0 1 13.600 13.600H8.400" fill="none" stroke="#22a548" stroke-width="1.600" stroke-linecap="round"/><path d="M1 7.400H9.300M6.900 4.900 9.700 7.400 6.900 9.900" fill="none" stroke="#22a548" stroke-width="1.750" stroke-linecap="round" stroke-linejoin="round"/></svg></td>
<td class="acts"><svg class="ic-speed" viewBox="0 0 16 14"><path d="M2.200 13.300A7.300 7.300 0 1 1 13.800 13.300Z" fill="#fff" stroke="#2f7bff" stroke-width="1.300" stroke-linejoin="round"/><path d="M8 8.800 11.600 5.400" stroke="#2f7bff" stroke-width="1.600" stroke-linecap="round"/><circle cx="7.600" cy="9" r="1.500" fill="#2f7bff"/><path d="M2.300 8H3.600M3.900 4 4.800 4.900M8 2.200V3.500M12.400 8H13.700M3.300 10.800H4.300M11.700 10.800H12.700" stroke="#2f7bff" stroke-width=".8"/></svg><svg class="ic-php2" viewBox="0 0 26 13"><ellipse cx="13.0" cy="6.500" rx="12.4" ry="5.900" fill="#fff" stroke="#111" stroke-width=".9"/><text x="12.8" y="9.400" text-anchor="middle" font-family="Liberation Sans,sans-serif" font-weight="700" font-style="italic" font-size="9.800" letter-spacing="-.5" fill="#111">php</text></svg><svg class="ic-mail" viewBox="0 0 16 10.400"><rect x=".8" y=".8" width="14.400" height="8.800" fill="#fff" stroke="#111" stroke-width="1.500"/><path d="M1 1 8 5.800 15 1" fill="none" stroke="#111" stroke-width="1.400"/></svg><svg class="ic-trash" viewBox="0 0 12 14"><path d="M.3 2.300H11.700M4 2V.8H8V2" fill="none" stroke="#f25c66" stroke-width="1.300"/><path d="M1.300 3.300H10.700V12.200A1.300 1.300 0 0 1 9.400 13.500H2.600A1.300 1.300 0 0 1 1.300 12.200Z" fill="#fbd0d3" stroke="#f25c66" stroke-width="1.200"/><path d="M3.700 4.600V11.600M6 4.600V11.600M8.300 4.600V11.600" stroke="#f25c66" stroke-width="1"/></svg></td>
</tr>
</tbody>
</table>
</div>
</div>
<div class="chat"><svg viewBox="0 0 22 22" width="22" height="22"><path d="M1 1H21V16.500H5.500L1 21Z" fill="#fff"/><path d="M4.500 5.200H17.500M4.500 8.700H17.500M4.500 12.200H13" stroke="#4d5cfb" stroke-width="1.900"/></svg></div>
<div class="anno a1"></div>
<div class="anno a2"></div>
<svg class="arrows" width="1579" height="717" viewBox="0 0 1579 717">
<path d="M197 69.500 203.900 75 202.200 76 235.800 143.500 198.800 77.800 197.200 78.700Z" fill="#ff0000" stroke="#ff0000" stroke-width=".6" stroke-linejoin="round"/>
<path d="M283 252.600 275.100 255 275.600 253 200.800 228.700 276.800 249 277.400 247Z" fill="#ff0000" stroke="#ff0000" stroke-width=".6" stroke-linejoin="round"/>
</svg>
</body>
</html>
